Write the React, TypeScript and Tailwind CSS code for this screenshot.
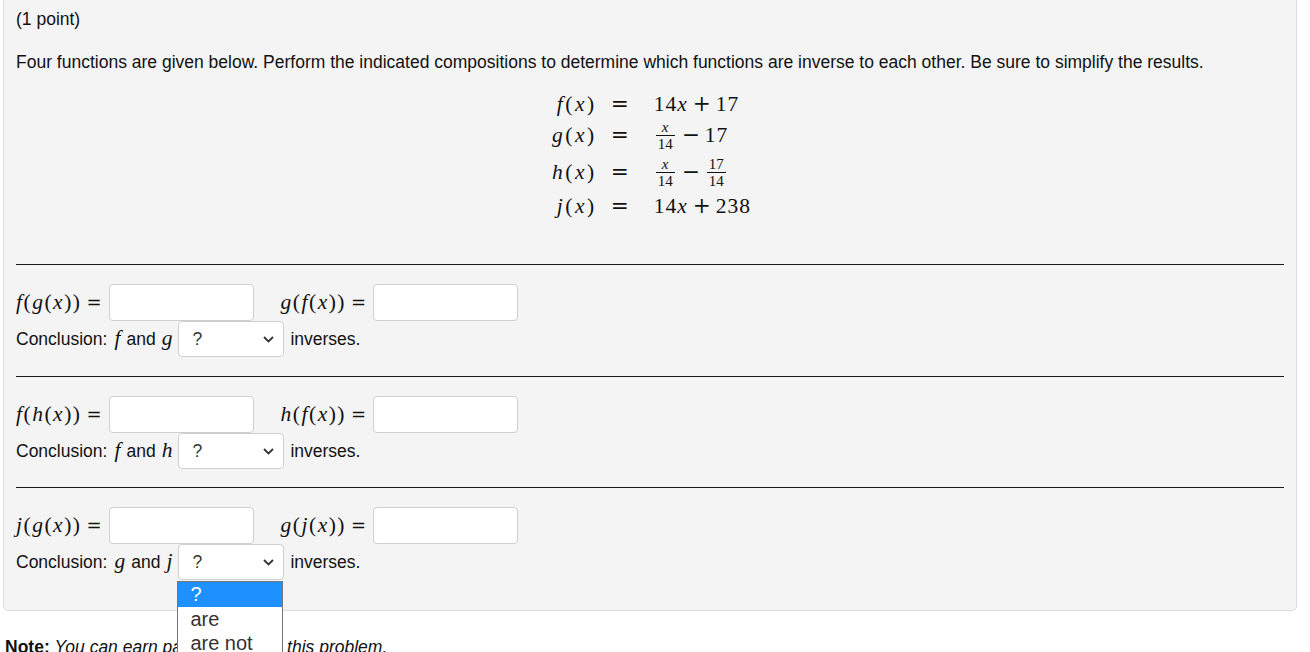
import React from "react";

const I = ({ children }: { children: React.ReactNode }) => (
  <span className="italic">{children}</span>
);

const Op = ({ children, cls = "mx-[5px]" }: { children: React.ReactNode; cls?: string }) => (
  <span className={"font-['DejaVu_Serif'] not-italic tracking-normal " + cls}>{children}</span>
);

const Frac = ({ n, d, italicN = false }: { n: string; d: string; italicN?: boolean }) => (
  <span className="inline-flex flex-col items-center mx-[2px] font-['Liberation_Serif'] text-[15px] leading-[14px] tracking-normal">
    <span className={"px-[2px] " + (italicN ? "italic" : "")}>{n}</span>
    <span className="self-stretch border-t border-[#111] my-[1px]" />
    <span className="px-[2px]">{d}</span>
  </span>
);

const Box = () => (
  <div className="w-[145px] h-[37px] bg-white border border-[#cfcfcf] rounded-[4px] shrink-0" />
);

const Chevron = () => (
  <svg width="11" height="7" viewBox="0 0 11 7" className="shrink-0">
    <path d="M1 1 L5.5 5.5 L10 1" fill="none" stroke="#333" strokeWidth="1.8" />
  </svg>
);

const Select = ({ open = false }: { open?: boolean }) => (
  <div className="relative ml-[6px] shrink-0">
    <div className="w-[106px] h-[36px] bg-white border border-[#cfcfcf] rounded-[4px] flex items-center justify-between pl-[13px] pr-[9px] text-[17.5px] text-[#333]">
      <span>?</span>
      <Chevron />
    </div>
    {open && (
      <div className="absolute left-[-1px] top-[37px] w-[106px] bg-white border border-[#767676] text-[20px] leading-[24px] text-[#333] z-10">
        <div className="bg-[#1e90ff] text-white pl-[12px] h-[25px]">?</div>
        <div className="pl-[12px] h-[24px]">are</div>
        <div className="pl-[12px] h-[24px]">are not</div>
      </div>
    )}
  </div>
);

const Label = ({ children, cls = "" }: { children: React.ReactNode; cls?: string }) => (
  <span className={"font-['Liberation_Serif'] text-[21.5px] text-[#111] whitespace-nowrap flex items-center " + cls}>
    <span className="tracking-[1.5px]">{children}</span>
    <Op cls="ml-[5px] text-[18px]">=</Op>
  </span>
);

const V = ({ children }: { children: React.ReactNode }) => (
  <span className="font-['Liberation_Serif'] text-[21.5px] leading-none italic">{children}</span>
);

type Pair = {
  l1: React.ReactNode;
  l2: React.ReactNode;
  a: string;
  b: string;
  open?: boolean;
};

const Section = ({ l1, l2, a, b, open }: Pair) => (
  <div>
    <div className="border-t border-[#1a1a1a]" />
    <div className="mt-[19px] flex items-center h-[37px]">
      <Label>{l1}</Label>
      <div className="ml-[7px]">
        <Box />
      </div>
      <Label cls="ml-[27px]">{l2}</Label>
      <div className="ml-[7px]">
        <Box />
      </div>
    </div>
    <div className="flex items-center h-[36px]">
      <span className="whitespace-nowrap">
        Conclusion:<span className="inline-block w-[7px]" />
        <V>{a}</V>
        <span className="inline-block w-[6px]" />and<span className="inline-block w-[6px]" />
        <V>{b}</V>
      </span>
      <Select open={open} />
      <span className="ml-[6px]">inverses.</span>
    </div>
  </div>
);

export default function App() {
  const rows = [
    { l: <><I>f</I>(<I>x</I>)</>, r: <>14<I>x</I><Op>+</Op>17</>, h: "h-[31px]" },
    { l: <><I>g</I>(<I>x</I>)</>, r: <><Frac n="x" d="14" italicN /><Op>−</Op>17</>, h: "h-[30px]" },
    { l: <><I>h</I>(<I>x</I>)</>, r: <><Frac n="x" d="14" italicN /><Op>−</Op><Frac n="17" d="14" /></>, h: "h-[44px]" },
    { l: <><I>j</I>(<I>x</I>)</>, r: <>14<I>x</I><Op>+</Op>238</>, h: "h-[24px]" },
  ];
  return (
    <div className="relative w-[1310px] h-[652px] overflow-hidden bg-white font-['Liberation_Sans',Arial,sans-serif] text-[17.5px] text-[#111]">
      <div className="ml-[3px] w-[1294px] bg-[#f4f4f4] border-x border-b border-[#dcdcdc] rounded-b-[5px] px-[12px] pt-[9px] pb-[30px]">
        <div className="h-[20px] leading-[20px]">(1 point)</div>
        <div className="mt-[23px] h-[20px] leading-[20px]">
          Four functions are given below. Perform the indicated compositions to determine which functions are inverse to each other. Be sure to simplify the results.
        </div>
        <div className="mt-[17px] flex justify-center">
          <div className="grid grid-cols-[auto_auto_auto] items-center font-['Liberation_Serif'] text-[21.5px]">
            {rows.map((row, i) => (
              <React.Fragment key={i}>
                <div className={"tracking-[2.5px] flex items-center justify-end pl-[3px] " + row.h}>{row.l}</div>
                <div className={"pl-[14px] pr-[25px] flex items-center " + row.h}>
                  <Op cls="">=</Op>
                </div>
                <div className={"flex items-center whitespace-pre tracking-[1px] " + row.h}>{row.r}</div>
              </React.Fragment>
            ))}
          </div>
        </div>
        <div className="mt-[46px]">
          <Section
            l1={<><I>f</I>(<I>g</I>(<I>x</I>))</>}
            l2={<><I>g</I>(<I>f</I>(<I>x</I>))</>}
            a="f"
            b="g"
          />
          <div className="mt-[19px]">
            <Section
              l1={<><I>f</I>(<I>h</I>(<I>x</I>))</>}
              l2={<><I>h</I>(<I>f</I>(<I>x</I>))</>}
              a="f"
              b="h"
            />
          </div>
          <div className="mt-[18px]">
            <Section
              l1={<><I>j</I>(<I>g</I>(<I>x</I>))</>}
              l2={<><I>g</I>(<I>j</I>(<I>x</I>))</>}
              a="g"
              b="j"
              open
            />
          </div>
        </div>
      </div>
      <div className="mt-[26px] ml-[5px] text-[17.5px] leading-[20px]">
        <b>Note:</b> <i>You can earn partial credit on this problem.</i>
      </div>
    </div>
  );
}
